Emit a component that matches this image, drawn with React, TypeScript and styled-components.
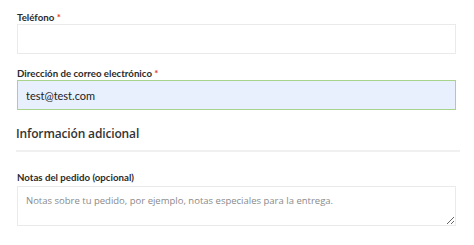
import styled, { createGlobalStyle } from "styled-components";

const GlobalStyle = createGlobalStyle`
  body {
    margin: 0;
    background: #fff;
    font-family: Lato, "Liberation Sans", sans-serif;
  }
`;

const Form = styled.div`
  width: 444px;
  padding: 10px 0 0 16px;
`;

const Field = styled.div`
  display: flex;
  flex-direction: column;
  margin: 0 4px 12px 1px;
`;

const Label = styled.label`
  font-family: Lato, sans-serif;
  font-weight: 700;
  font-size: 9.7px;
  line-height: 14px;
  color: #2b2b2b;

  span {
    color: #e2401c;
  }
`;

const Input = styled.input<{ $filled?: boolean }>`
  box-sizing: border-box;
  height: 30px;
  padding: 0 8px;
  font-family: Lato, sans-serif;
  font-size: 11px;
  color: #222;
  outline: none;
  border: 1px solid ${(p) => (p.$filled ? "#a7d48a" : "#eaeaea")};
  background: ${(p) => (p.$filled ? "#e8f0fe" : "#fff")};
`;

const Heading = styled.h3`
  margin: 0;
  padding: 2px 0 6px;
  font-family: "Open Sans", sans-serif;
  font-weight: 600;
  font-size: 12px;
  letter-spacing: -0.15px;
  line-height: 20px;
  color: #333;
  border-bottom: 2px solid #f0f0f0;
`;

const Notes = styled(Field)`
  margin-top: 18px;

  ${Label} {
    margin-bottom: 2px;
  }
`;

const TextArea = styled.textarea`
  box-sizing: border-box;
  height: 40px;
  padding: 7px 8px;
  resize: vertical;
  font-family: "Open Sans", sans-serif;
  font-size: 9.5px;
  color: #333;
  outline: none;
  border: 1px solid #eaeaea;

  &::placeholder {
    color: #8a8a8a;
  }
`;

export default function App() {
  return (
    <>
      <GlobalStyle />
      <Form>
        <Field>
          <Label>
            Teléfono <span>*</span>
          </Label>
          <Input type="tel" />
        </Field>
        <Field>
          <Label>
            Dirección de correo electrónico <span>*</span>
          </Label>
          <Input $filled type="email" defaultValue="test@test.com" />
        </Field>
        <Heading>Información adicional</Heading>
        <Notes>
          <Label>Notas del pedido (opcional)</Label>
          <TextArea placeholder="Notas sobre tu pedido, por ejemplo, notas especiales para la entrega." />
        </Notes>
      </Form>
    </>
  );
}
